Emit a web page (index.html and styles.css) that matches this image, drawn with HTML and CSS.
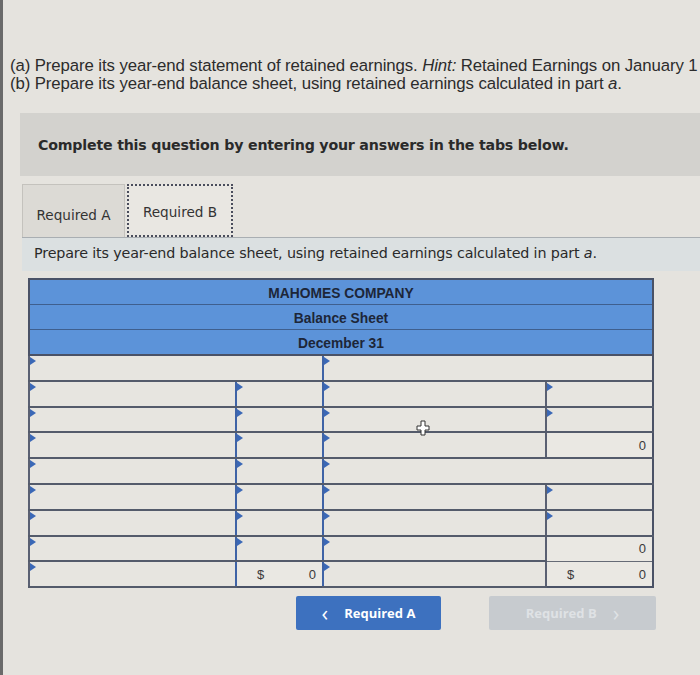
FILE: index.html
```html
<!DOCTYPE html>
<html lang="en">
<head>
<meta charset="utf-8">
<title>Balance Sheet</title>
<link rel="stylesheet" href="styles.css">
</head>
<body>
<div class="screen">
  <div class="intro">
    <p class="line">(a) Prepare its year-end statement of retained earnings. <i>Hint:</i> Retained Earnings on January 1</p>
    <p class="line">(b) Prepare its year-end balance sheet, using retained earnings calculated in part <i>a</i>.</p>
  </div>

  <div class="notice"><span>Complete this question by entering your answers in the tabs below.</span></div>

  <div class="tabs">
    <div class="tab">Required A</div>
    <div class="tab active">Required B</div>
  </div>

  <div class="tab-strip"><span>Prepare its year-end balance sheet, using retained earnings calculated in part <i>a</i>.</span></div>

  <div class="sheet-wrap">
    <table class="sheet">
      <colgroup>
        <col class="c1"><col class="c2"><col class="c3"><col class="c4">
      </colgroup>
      <tr class="hd"><td colspan="4">MAHOMES COMPANY</td></tr>
      <tr class="hd"><td colspan="4">Balance Sheet</td></tr>
      <tr class="hd last"><td colspan="4">December 31</td></tr>

      <tr><td colspan="2" class="in"></td><td colspan="2" class="in left"></td></tr>
      <tr><td class="in"></td><td class="in blue"></td><td class="in left"></td><td class="in"></td></tr>
      <tr><td class="in"></td><td class="in blue"></td><td class="in left"></td><td class="in"></td></tr>
      <tr><td class="in"></td><td class="in blue"></td><td class="in left"></td><td class="calc"><span></span><span>0</span></td></tr>
      <tr><td class="in"></td><td class="in blue"></td><td colspan="2" class="in left"></td></tr>
      <tr><td class="in"></td><td class="in blue"></td><td class="in left"></td><td class="in"></td></tr>
      <tr><td class="in"></td><td class="in blue"></td><td class="in left"></td><td class="in"></td></tr>
      <tr><td class="in"></td><td class="in blue"></td><td class="in left"></td><td class="calc"><span></span><span>0</span></td></tr>
      <tr><td class="in"></td><td class="calc blue"><span>$</span><span>0</span></td><td class="in left"></td><td class="calc"><span>$</span><span>0</span></td></tr>
    </table>
    <div class="cursor" aria-hidden="true">
      <svg width="14" height="16" viewBox="0 0 14 16">
        <path d="M5 1h4v5h4v4H9v5H5v-5H1V6h4z" fill="#ffffff" stroke="#333" stroke-width="1"/>
      </svg>
    </div>
  </div>

  <div class="nav">
    <button class="btn prev"><span class="chev">&lsaquo;</span><span>Required A</span></button>
    <button class="btn next" disabled><span>Required B</span><span class="chev r">&rsaquo;</span></button>
  </div>
</div>
</body>
</html>
```

FILE: styles.css
```css
html, body {
  margin: 0;
  padding: 0;
}
body {
  background: #e5e3de;
  width: 700px;
  height: 675px;
  overflow: hidden;
}
.screen {
  border-left: 3px solid #6a6a6a;
  height: 675px;
  box-sizing: border-box;
  padding-top: 57px;
}
.intro {
  padding-left: 7px;
  font-family: "Liberation Sans", Arial, sans-serif;
  font-size: 16.8px;
  color: #2c2c2c;
  white-space: nowrap;
}
.line {
  margin: 0;
  line-height: 18px;
  letter-spacing: -0.1px;
}
.notice {
  margin: 20px 0 0 17px;
  height: 63px;
  background: #d3d2ce;
  font-family: "DejaVu Sans", Verdana, sans-serif;
  font-weight: bold;
  font-size: 14.2px;
  color: #2a2a2a;
  display: flex;
  align-items: center;
  padding-left: 18px;
  letter-spacing: -0.2px;
}
.tabs {
  display: flex;
  margin: 8px 0 0 19px;
  height: 53px;
  gap: 2px;
}
.tab {
  width: 103px;
  box-sizing: border-box;
  display: flex;
  align-items: center;
  justify-content: center;
  padding-top: 7px;
  font-family: "DejaVu Sans", Verdana, sans-serif;
  font-size: 13.6px;
  color: #333;
  background: #dcdad5;
  border: 1px solid #c4c2bd;
  border-bottom: none;
}
.tab.active {
  width: 106px;
  padding-top: 3px;
  background: #e9e7e2;
  border: 2px dotted #4a4d5c;
}
.tab-strip {
  margin-left: 19px;
  height: 34px;
  background: #dbe0e1;
  border-top: 1px solid #a9aeb2;
  box-sizing: border-box;
  display: flex;
  align-items: center;
  padding-left: 12px;
  padding-bottom: 3px;
  font-family: "DejaVu Sans", Verdana, sans-serif;
  font-size: 14.3px;
  color: #2a2a2a;
  letter-spacing: -0.15px;
  white-space: nowrap;
}
.sheet-wrap {
  position: relative;
  margin: 7px 0 0 25px;
  width: 626px;
}
.sheet {
  border-collapse: collapse;
  table-layout: fixed;
  width: 626px;
  border: 2px solid #4a5266;
}
.c1 { width: 207px; }
.c2 { width: 87px; }
.c3 { width: 223px; }
.c4 { width: 107px; }
.sheet td {
  height: 23.8px;
  padding: 0;
  background: #e7e5e0;
  border-top: 2px solid #545b6b;
  border-bottom: 2px solid #545b6b;
  border-left: 2px solid #5a6072;
  position: relative;
  font-family: "Liberation Sans", Arial, sans-serif;
  font-size: 13px;
  color: #3a3a3a;
}
.sheet td.blue {
  border-left: 2px solid #3f63a6;
}
.sheet td.left {
  border-left: 2px solid #3f63a6;
}
.sheet tr.hd td {
  background: #5c93d9;
  height: 21px;
  text-align: center;
  font-weight: bold;
  font-size: 13.8px;
  color: #1d2638;
  border-top: 1px solid #3f5f8e;
  border-bottom: 1px solid #3f5f8e;
  border-left: none;
  padding-top: 3px;
}
.sheet tr.hd.last td {
  border-bottom: 2px solid #4a5266;
}
.sheet td.in::before {
  content: "";
  position: absolute;
  left: 0;
  top: 1px;
  border-left: 6px solid #3b68b6;
  border-top: 4px solid transparent;
  border-bottom: 4px solid transparent;
}
.sheet td.calc {
  border-top: 1px solid #666b76;
  border-bottom: 1px solid #666b76;
  background: #eae8e3;
}
.calc {
  white-space: nowrap;
}
.calc span:first-child {
  float: left;
  padding-left: 20px;
}
.calc span:last-child {
  float: right;
  padding-right: 6px;
}
.cursor {
  position: absolute;
  left: 388px;
  top: 142px;
  line-height: 0;
}
.nav {
  display: flex;
  gap: 48px;
  margin: 8px 0 0 293px;
  align-items: center;
}
.btn {
  height: 34px;
  border: none;
  border-radius: 2px;
  font-family: "Open Sans", "DejaVu Sans", sans-serif;
  font-weight: bold;
  font-size: 13px;
  display: flex;
  align-items: center;
  justify-content: center;
  padding: 0;
}
.btn.prev {
  width: 145px;
  background: #3d71bf;
  color: #ffffff;
}
.btn.next {
  width: 167px;
  background: #c7cbcf;
  color: #dfe2e5;
}
.chev {
  font-size: 22px;
  font-weight: normal;
  margin-right: 16px;
  line-height: 1;
  margin-top: -3px;
}
.chev.r {
  margin-right: 0;
  margin-left: 16px;
}
```
